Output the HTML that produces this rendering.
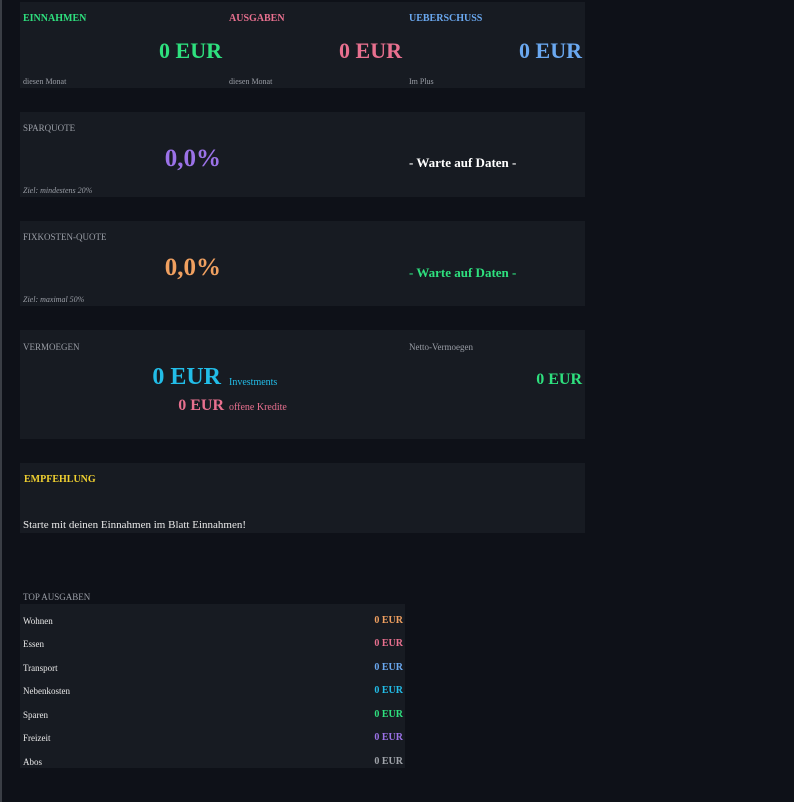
<!DOCTYPE html>
<html><head><meta charset="utf-8"><style>
html,body{margin:0;padding:0}
body{width:794px;height:802px;background:#0e1118;position:relative;overflow:hidden;font-family:"Liberation Serif",serif;}
.lb{position:absolute;left:0;top:0;width:2px;height:802px;background:#3a3e45}
.p{position:absolute;left:20px;width:565px;background:#171b22}
.t{position:absolute;white-space:nowrap;line-height:1}
.b{font-weight:bold}
.s{font-size:9px;color:#9a9ea6}
.r{text-align:right}
</style></head><body>
<div class="lb"></div>
<div class="p" style="top:2px;height:86px"></div>
<div class="p" style="top:112px;height:85px"></div>
<div class="p" style="top:221px;height:85px"></div>
<div class="p" style="top:330px;height:109px"></div>
<div class="p" style="top:463px;height:70px"></div>
<div style="position:absolute;left:20px;top:604px;width:385px;height:164px;background:#171b22"></div>

<div class="t b" style="left:23px;top:14px;font-size:10px;color:#2ee07e">EINNAHMEN</div>
<div class="t b" style="left:229px;top:14px;font-size:10px;color:#e8708f">AUSGABEN</div>
<div class="t b" style="left:409px;top:14px;font-size:10px;color:#6aa8f0">UEBERSCHUSS</div>
<div class="t b r" style="left:100px;width:122px;top:40px;font-size:22px;color:#2ee07e">0 EUR</div>
<div class="t b r" style="left:280px;width:122px;top:40px;font-size:22px;color:#e8708f">0 EUR</div>
<div class="t b r" style="left:460px;width:122px;top:40px;font-size:22px;color:#6aa8f0">0 EUR</div>
<div class="t s" style="left:23px;top:78px;font-size:8px">diesen Monat</div>
<div class="t s" style="left:229px;top:78px;font-size:8px">diesen Monat</div>
<div class="t s" style="left:409px;top:78px;font-size:8px">Im Plus</div>

<div class="t s" style="left:23px;top:124px">SPARQUOTE</div>
<div class="t b r" style="left:100px;width:121px;top:146px;font-size:25px;color:#9b72e8">0,0%</div>
<div class="t b" style="left:409px;top:156px;font-size:13px;color:#ffffff">- Warte auf Daten -</div>
<div class="t s" style="left:23px;top:187px;font-size:8px;font-style:italic">Ziel: mindestens 20%</div>

<div class="t s" style="left:23px;top:233px">FIXKOSTEN-QUOTE</div>
<div class="t b r" style="left:100px;width:121px;top:255px;font-size:25px;color:#f0a060">0,0%</div>
<div class="t b" style="left:409px;top:266px;font-size:13px;color:#2ee07e">- Warte auf Daten -</div>
<div class="t s" style="left:23px;top:296px;font-size:8px;font-style:italic">Ziel: maximal 50%</div>

<div class="t s" style="left:23px;top:343px">VERMOEGEN</div>
<div class="t s" style="left:409px;top:343px">Netto-Vermoegen</div>
<div class="t b r" style="left:100px;width:121px;top:365px;font-size:24px;color:#22bde8">0 EUR</div>
<div class="t" style="left:229px;top:378px;font-size:10px;color:#22bde8">Investments</div>
<div class="t b r" style="left:120px;width:104px;top:398px;font-size:16px;color:#e8708f">0 EUR</div>
<div class="t" style="left:229px;top:403px;font-size:10px;color:#e8708f">offene Kredite</div>
<div class="t b r" style="left:480px;width:102px;top:372px;font-size:16px;color:#2ee07e">0 EUR</div>

<div class="t b" style="left:24px;top:475px;font-size:10px;color:#f0d030">EMPFEHLUNG</div>
<div class="t" style="left:23px;top:520px;font-size:11px;color:#e8e8e8">Starte mit deinen Einnahmen im Blatt Einnahmen!</div>

<div class="t s" style="left:23px;top:593px">TOP AUSGABEN</div>
<div class="t" style="left:23px;top:617px;font-size:9px;color:#e8e8e8">Wohnen</div>
<div class="t" style="left:23px;top:640px;font-size:9px;color:#e8e8e8">Essen</div>
<div class="t" style="left:23px;top:664px;font-size:9px;color:#e8e8e8">Transport</div>
<div class="t" style="left:23px;top:687px;font-size:9px;color:#e8e8e8">Nebenkosten</div>
<div class="t" style="left:23px;top:711px;font-size:9px;color:#e8e8e8">Sparen</div>
<div class="t" style="left:23px;top:734px;font-size:9px;color:#e8e8e8">Freizeit</div>
<div class="t" style="left:23px;top:758px;font-size:9px;color:#e8e8e8">Abos</div>
<div class="t b r" style="left:340px;width:63px;top:616px;font-size:10px;color:#f0a060">0 EUR</div>
<div class="t b r" style="left:340px;width:63px;top:639px;font-size:10px;color:#e8708f">0 EUR</div>
<div class="t b r" style="left:340px;width:63px;top:663px;font-size:10px;color:#6aa8f0">0 EUR</div>
<div class="t b r" style="left:340px;width:63px;top:686px;font-size:10px;color:#22bde8">0 EUR</div>
<div class="t b r" style="left:340px;width:63px;top:710px;font-size:10px;color:#2ee07e">0 EUR</div>
<div class="t b r" style="left:340px;width:63px;top:733px;font-size:10px;color:#9b72e8">0 EUR</div>
<div class="t b r" style="left:340px;width:63px;top:757px;font-size:10px;color:#a0a4aa">0 EUR</div>
</body></html>
